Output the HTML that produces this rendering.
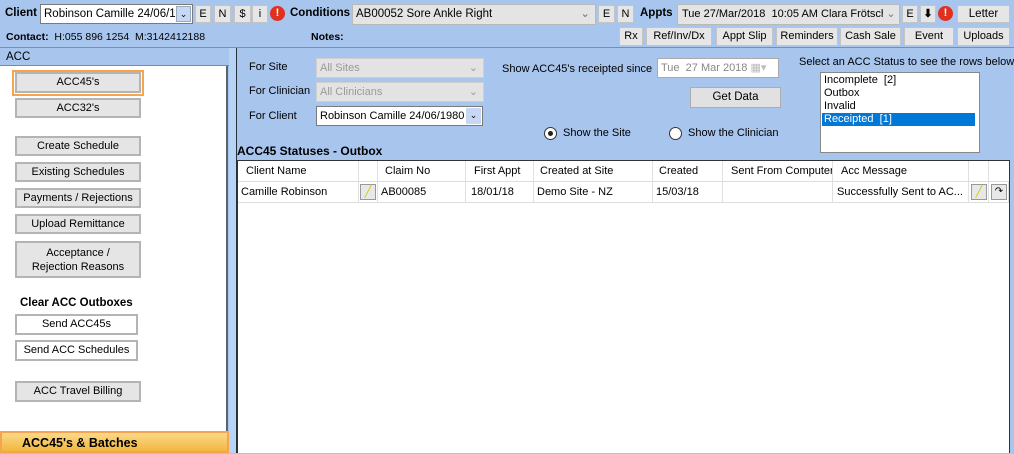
<!DOCTYPE html>
<html><head><style>
*{box-sizing:border-box;margin:0;padding:0}
body{width:1014px;height:453px;overflow:hidden;background:#a8c5ee;font-family:"Liberation Sans",sans-serif;font-size:11px;color:#000;position:relative}
.a{position:absolute;white-space:nowrap}
.b{font-weight:bold}
.sbtn{position:absolute;background:#e6e6e6;border:1px solid #c4c4c4;text-align:center;font-size:11px;line-height:17px;white-space:nowrap}
.inp{position:absolute;background:#fff;border:1px solid #7a7a7a;padding-left:3px;font-size:11.5px;line-height:18px;overflow:hidden;white-space:nowrap}
.dis{position:absolute;background:#e3e3e3;border:1px solid #cfcfcf;color:#9a9a9a;padding-left:3px;font-size:11px;line-height:18px;overflow:hidden;white-space:nowrap}
.lbtn{position:absolute;left:15px;width:126px;background:#e5e5e5;border:2px solid #b4b4b4;text-align:center;font-size:11px;white-space:nowrap}
.cell{position:absolute;height:20px;border-right:1px solid #e0e0e0;padding-left:5px;line-height:20px;overflow:hidden;white-space:nowrap}
</style></head><body>
<div class="a b" style="left:5px;top:7px;font-size:11.5px">Client</div>
<div class="inp" style="left:40px;top:4px;width:153px;height:20px">Robinson Camille 24/06/19</div>
<div class="a" style="left:176px;top:6px;width:15px;height:16px;background:#c6d8f4;border:1px solid #9ab;text-align:center;font-size:9px;line-height:14px">&#8964;</div>
<div class="sbtn" style="left:195px;top:5px;width:16px;height:18px">E</div>
<div class="sbtn" style="left:214px;top:5px;width:17px;height:18px">N</div>
<div class="sbtn" style="left:234px;top:5px;width:17px;height:18px">$</div>
<div class="sbtn" style="left:252px;top:5px;width:16px;height:18px">i</div>
<div class="a" style="left:270px;top:6px;width:15px;height:15px;border-radius:50%;background:#e0301e;color:#fff;font-weight:bold;font-size:11px;text-align:center;line-height:15px">!</div>
<div class="a b" style="left:290px;top:7px;font-size:11.5px">Conditions</div>
<div class="dis" style="left:352px;top:4px;width:244px;height:21px;color:#000;background:#e4e4e4;border-color:#b9b9b9;font-size:11.5px">AB00052 Sore Ankle Right<span style="position:absolute;right:5px;color:#777">&#8964;</span></div>
<div class="sbtn" style="left:598px;top:5px;width:17px;height:18px">E</div>
<div class="sbtn" style="left:617px;top:5px;width:17px;height:18px">N</div>
<div class="a b" style="left:640px;top:7px;font-size:11.5px">Appts</div>
<div class="dis" style="left:677px;top:4px;width:223px;height:21px;color:#000;background:#e4e4e4;border-color:#b9b9b9;font-size:11px;padding-left:4px">Tue 27/Mar/2018&nbsp; 10:05 AM Clara Frötsch<span style="position:absolute;right:0;top:0;width:16px;background:#e4e4e4;color:#777;text-align:center">&#8964;</span></div>
<div class="sbtn" style="left:902px;top:5px;width:16px;height:18px">E</div>
<div class="sbtn" style="left:920px;top:5px;width:16px;height:18px;font-weight:bold">&#11015;</div>
<div class="a" style="left:938px;top:6px;width:15px;height:15px;border-radius:50%;background:#e0301e;color:#fff;font-weight:bold;font-size:11px;text-align:center;line-height:15px">!</div>
<div class="sbtn" style="left:957px;top:5px;width:53px;height:18px;font-size:11.5px">Letter</div>
<div class="a b" style="left:6px;top:31px;font-size:10.5px">Contact:&nbsp; <span style="font-weight:normal">H:055 896 1254&nbsp; M:3142412188</span></div>
<div class="a b" style="left:311px;top:31px;font-size:10.5px">Notes:</div>
<div class="sbtn" style="left:619px;top:27px;width:24px;height:19px">Rx</div>
<div class="sbtn" style="left:646px;top:27px;width:66px;height:19px">Ref/Inv/Dx</div>
<div class="sbtn" style="left:716px;top:27px;width:57px;height:19px">Appt Slip</div>
<div class="sbtn" style="left:776px;top:27px;width:62px;height:19px">Reminders</div>
<div class="sbtn" style="left:840px;top:27px;width:61px;height:19px">Cash Sale</div>
<div class="sbtn" style="left:904px;top:27px;width:50px;height:19px">Event</div>
<div class="sbtn" style="left:957px;top:27px;width:53px;height:19px">Uploads</div>
<div class="a" style="left:0;top:47px;width:1014px;height:1px;background:#7d8ea8"></div>
<div class="a" style="left:0;top:48px;width:229px;height:18px;border-bottom:1px solid #7b8aa0"><span style="position:absolute;left:6px;top:3px;font-size:11.5px">ACC</span></div>
<div class="a" style="left:0;top:66px;width:228px;height:387px;background:#fff;border-right:2px solid #5a6470"></div>
<div class="a" style="left:12px;top:70px;width:132px;height:26px;border:2px solid #f7a450"></div>
<div class="lbtn" style="left:15px;top:72px;height:21px;line-height:17px">ACC45's</div>
<div class="lbtn" style="top:98px;height:20px;line-height:16px">ACC32's</div>
<div class="lbtn" style="top:136px;height:20px;line-height:16px">Create Schedule</div>
<div class="lbtn" style="top:162px;height:20px;line-height:16px">Existing Schedules</div>
<div class="lbtn" style="top:188px;height:20px;line-height:16px">Payments / Rejections</div>
<div class="lbtn" style="top:214px;height:20px;line-height:16px">Upload Remittance</div>
<div class="lbtn" style="top:241px;height:37px;line-height:14px;padding-top:3px">Acceptance /<br>Rejection Reasons</div>
<div class="a b" style="left:20px;top:297px;font-size:11.5px">Clear ACC Outboxes</div>
<div class="lbtn" style="top:314px;width:123px;height:21px;line-height:17px;background:#fff">Send ACC45s</div>
<div class="lbtn" style="top:340px;width:123px;height:21px;line-height:17px;background:#fff">Send ACC Schedules</div>
<div class="lbtn" style="top:381px;height:21px;line-height:17px">ACC Travel Billing</div>
<div class="a b" style="left:0;top:431px;width:229px;height:22px;background:linear-gradient(#fbd98a,#f2b73e);border:2px solid #f7a450;font-size:12.5px;padding-left:20px;line-height:21px">ACC45's &amp; Batches</div>
<div class="a" style="left:229px;top:48px;width:7px;height:405px;background:#b7d4f5"></div>
<div class="a" style="left:236px;top:48px;width:1px;height:405px;background:#27303a"></div>
<div class="a" style="left:249px;top:61px">For Site</div>
<div class="dis" style="left:316px;top:58px;width:168px;height:20px">All Sites<span style="position:absolute;right:5px">&#8964;</span></div>
<div class="a" style="left:249px;top:85px">For Clinician</div>
<div class="dis" style="left:316px;top:82px;width:168px;height:20px">All Clinicians<span style="position:absolute;right:5px">&#8964;</span></div>
<div class="a" style="left:249px;top:110px">For Client</div>
<div class="inp" style="left:316px;top:106px;width:167px;height:20px;font-size:11px">Robinson Camille 24/06/1980</div>
<div class="a" style="left:466px;top:108px;width:15px;height:16px;background:#c6d8f4;text-align:center;font-size:9px;line-height:15px">&#8964;</div>
<div class="a" style="left:502px;top:63px">Show ACC45's receipted since</div>
<div class="inp" style="left:657px;top:58px;width:122px;height:20px;color:#888;border-color:#aaa;font-size:11px">Tue&nbsp; 27 Mar 2018 <span style="color:#bbb">&#9638;&#9662;</span></div>
<div class="sbtn" style="left:690px;top:87px;width:91px;height:21px;background:#e1e1e1;border-color:#adadad;font-size:11.5px;line-height:19px">Get Data</div>
<div class="a" style="left:544px;top:127px;width:13px;height:13px;border-radius:50%;border:1px solid #333;background:#fff"><div style="position:absolute;left:3px;top:3px;width:5px;height:5px;border-radius:50%;background:#222"></div></div>
<div class="a" style="left:563px;top:127px">Show the Site</div>
<div class="a" style="left:669px;top:127px;width:13px;height:13px;border-radius:50%;border:1px solid #333;background:#fff"></div>
<div class="a" style="left:688px;top:127px">Show the Clinician</div>
<div class="a" style="left:799px;top:56px">Select an ACC Status to see the rows below</div>
<div class="a" style="left:820px;top:72px;width:160px;height:81px;background:#fff;border:1px solid #888;line-height:13px;padding-left:3px;padding-top:1px">Incomplete&nbsp; [2]<br>Outbox<br>Invalid<br><span style="display:block;margin-left:-2px;width:153px;background:#0078d7;color:#fff;padding-left:2px">Receipted&nbsp; [1]</span></div>
<div class="a b" style="left:237px;top:144px;font-size:12px">ACC45 Statuses - Outbox</div>
<div class="a" style="left:237px;top:160px;width:773px;height:293px;background:#fff;border:1px solid #333;border-bottom:none"></div>
<div class="a" style="left:238px;top:161px;width:771px;height:21px;border-bottom:1px solid #ddd">
<div class="cell" style="left:0;width:121px;padding-left:8px">Client Name</div>
<div class="cell" style="left:121px;width:19px"></div>
<div class="cell" style="left:140px;width:88px;padding-left:7px">Claim No</div>
<div class="cell" style="left:228px;width:68px;padding-left:8px">First Appt</div>
<div class="cell" style="left:296px;width:119px;padding-left:6px">Created at Site</div>
<div class="cell" style="left:415px;width:70px;padding-left:6px">Created</div>
<div class="cell" style="left:485px;width:110px;padding-left:8px">Sent From Computer</div>
<div class="cell" style="left:595px;width:136px;padding-left:8px">Acc Message</div>
<div class="cell" style="left:731px;width:20px"></div>
</div>
<div class="a" style="left:238px;top:182px;width:771px;height:21px;border-bottom:1px solid #ddd">
<div class="cell" style="left:0;width:121px;padding-left:3px">Camille Robinson</div>
<div class="cell" style="left:121px;width:19px;padding:0"><div style="position:absolute;left:1px;top:2px;width:16px;height:16px;background:#e8e8e8;border:1px solid #999;color:#cc0;font-size:11px;line-height:14px;text-align:center">&#9585;</div></div>
<div class="cell" style="left:140px;width:88px;padding-left:3px">AB00085</div>
<div class="cell" style="left:228px;width:68px">18/01/18</div>
<div class="cell" style="left:296px;width:119px;padding-left:3px">Demo Site - NZ</div>
<div class="cell" style="left:415px;width:70px;padding-left:3px">15/03/18</div>
<div class="cell" style="left:485px;width:110px"></div>
<div class="cell" style="left:595px;width:136px;padding-left:4px">Successfully Sent to AC...</div>
<div class="cell" style="left:731px;width:20px;padding:0"><div style="position:absolute;left:2px;top:2px;width:16px;height:16px;background:#e8e8e8;border:1px solid #999;color:#cc0;font-size:11px;line-height:14px;text-align:center">&#9585;</div></div>
<div class="cell" style="left:751px;width:20px;padding:0"><div style="position:absolute;left:2px;top:2px;width:16px;height:16px;background:#e8e8e8;border:1px solid #999;font-size:10px;line-height:14px;text-align:center">&#8631;</div></div>
</div>
</body></html>
